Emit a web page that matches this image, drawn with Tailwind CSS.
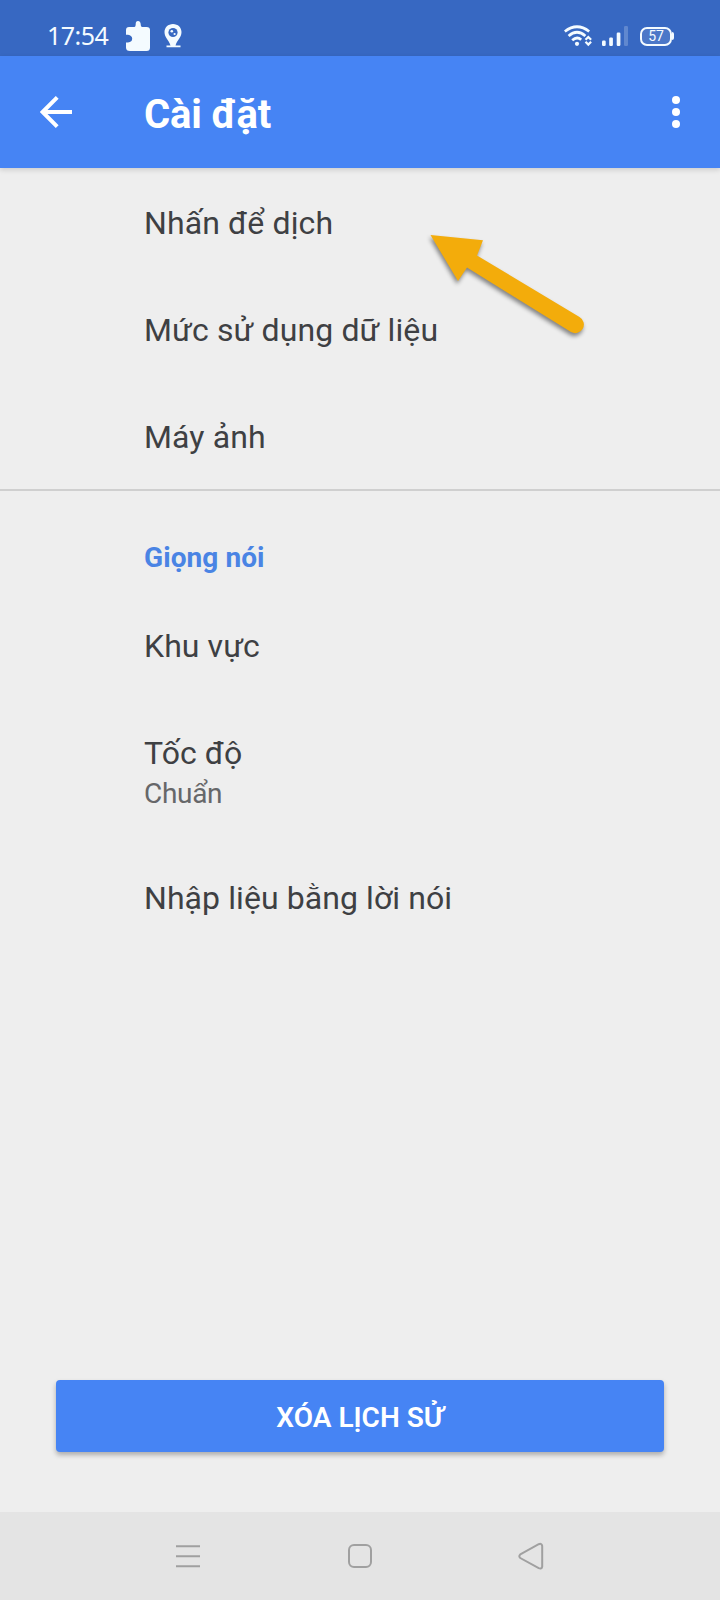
<!DOCTYPE html>
<html lang="vi">
<head>
<meta charset="utf-8">
<meta name="viewport" content="width=device-width, initial-scale=1">
<title>Cài đặt</title>
<script src="https://cdn.jsdelivr.net/npm/@tailwindcss/browser@4"></script>
</head>
<body class="bg-[#eeeeee]">
<div class="relative flex h-[1600px] w-[720px] flex-col overflow-hidden bg-[#eeeeee] font-['Roboto',sans-serif] text-[#3e4043]">

  <!-- Status bar -->
  <div class="flex h-14 shrink-0 items-center justify-between bg-[#3768c2] pl-[47px] pr-[46px] pt-4 text-[#f4fbff]">
    <div class="flex items-center">
      <span class="w-[78px] whitespace-nowrap pb-[2px] font-['Noto_Sans',sans-serif] text-[25px] leading-10 tracking-[-0.5px]">17:54</span>
      <svg class="block h-[32px] w-[26px]" viewBox="0 0 26 32" fill="currentColor"><path d="M4 7H9.5Q10.7 6.500 10.700 4.500V4Q10.700 1 13 1T15.700 4V4.500Q15.700 6.500 17 7H21.500Q25 7 25 10V27.500Q25 31 21.500 31H5Q1 31 1 27.500V22.600H3Q7.200 21.800 7.200 18.700T3 14.800H1V10Q1 7 4 7Z"/></svg>
      <svg class="ml-3 block h-[26px] w-5" viewBox="0 0 20 26"><path d="M10 1C5 1 1.500 4.600 1.500 9C1.500 14.500 5.800 17 7.500 22.500H3.500V24.300H17.500V22.500H12.500C14.200 17 18.500 14.500 18.500 9C18.500 4.600 15 1 10 1Z" fill="currentColor"/><circle cx="10" cy="9.500" r="4.600" fill="#3768c2"/><circle cx="8.800" cy="8.300" r="1.300" fill="currentColor"/><circle cx="11.600" cy="11" r="1.100" fill="currentColor"/></svg>
    </div>
    <div class="flex items-center">
      <svg class="block h-[22px] w-[28px]" viewBox="0 0 28 22" fill="none" stroke="currentColor" stroke-width="2.700"><path d="M.8 6.500Q13 -3 25.200 6.500M4.600 11Q13 3.500 21.400 11M8.200 15.300Q13 11 17.200 14.800"/><circle cx="13" cy="18.800" r="2.100" fill="currentColor" stroke="none"/><path d="M21.500 14.800L24.300 12L27.100 14.800M21.500 16.800L24.300 19.600L27.100 16.800" stroke-width="2.200"/></svg>
      <svg class="ml-[9px] block h-[22px] w-[28px]" viewBox="0 0 28 22" fill="currentColor"><rect x="1" y="15.500" width="3.700" height="5.500" rx="1.200"/><rect x="8.200" y="12.500" width="3.700" height="8.500" rx="1.200"/><rect x="15.700" y="7.500" width="3.700" height="13.500" rx="1.200"/><rect x="23" y="1" width="4" height="20" rx="1.200" opacity=".22"/></svg>
      <div class="ml-[11px] flex items-center">
        <div class="flex h-[19px] w-8 items-center justify-center rounded-[7px] border-2 border-current bg-white/10 text-[14px] leading-none"><span>57</span></div>
        <div class="h-2 w-[2px] rounded-r bg-current"></div>
      </div>
    </div>
  </div>

  <!-- App bar -->
  <header class="flex h-28 shrink-0 items-center bg-[#4684f4] pl-10 pr-10 text-white shadow-[0_2px_5px_rgba(0,0,0,0.14)]">
    <svg class="block h-8 w-8" viewBox="0 0 32 32" fill="none" stroke="currentColor" stroke-width="4"><path d="M32 16H3M17.200 1.400L2.600 16L17.200 30.600"/></svg>
    <h1 class="ml-[72px] pt-[6px] text-[40px] font-bold leading-[48px] tracking-[-0.15px]">Cài đặt</h1>
    <svg class="ml-auto block h-8 w-8" viewBox="0 0 32 32" fill="currentColor"><circle cx="28" cy="4" r="4"/><circle cx="28" cy="16" r="4"/><circle cx="28" cy="28" r="4"/></svg>
  </header>

  <!-- General settings -->
  <ul class="h-[323px] shrink-0 border-b-2 border-[#cfcfcf] pl-36 text-[32px] leading-[38px] tracking-[0.12px]">
    <li class="flex h-[107px] items-center pt-[3px]">Nhấn để dịch</li>
    <li class="flex h-[107px] items-center pt-[3px]">Mức sử dụng dữ liệu</li>
    <li class="flex h-[107px] items-center pt-[3px]">Máy ảnh</li>
  </ul>

  <!-- Voice settings -->
  <section class="pl-36 text-[32px] leading-[38px] tracking-[0.08px]">
    <h2 class="h-[100px] pt-[50px] text-[28px] font-bold leading-[34px] text-[#4a84e4]">Giọng nói</h2>
    <div class="flex h-[107px] items-center pt-[3px]">Khu vực</div>
    <div class="h-[145px] pt-9">
      <div>Tốc độ</div>
      <div class="mt-[3px] text-[28px] tracking-[-0.3px] text-[#666769]">Chuẩn</div>
    </div>
    <div class="flex h-[107px] items-center pt-[3px]">Nhập liệu bằng lời nói</div>
  </section>

  <button class="mx-14 mb-[60px] mt-auto h-[72px] shrink-0 rounded-[4px] bg-[#4684f4] pt-1 text-[28px] font-semibold leading-8 text-white shadow-[0_3px_5px_rgba(0,0,0,0.28)]">XÓA LỊCH SỬ</button>

  <!-- System navigation -->
  <nav class="flex h-[88px] shrink-0 items-center justify-between bg-[#e4e4e4] px-[174px] text-[#a0a0a0]">
    <svg class="block h-7 w-7" viewBox="0 0 28 28" fill="none" stroke="currentColor" stroke-width="2"><path d="M2 4.300H26M2 14.300H26M2 24.300H26"/></svg>
    <svg class="block h-7 w-7" viewBox="0 0 28 28" fill="none" stroke="currentColor" stroke-width="2"><rect x="3" y="3" width="22" height="22" rx="5"/></svg>
    <svg class="block h-7 w-7" viewBox="0 0 28 28" fill="none" stroke="currentColor" stroke-width="2"><path d="M2.300 12.400L20.700 2.200Q23.800 1 24.200 4V24.500Q23.800 27.500 20.700 26.200L2.300 16Q.300 14.200 2.300 12.400Z"/></svg>
  </nav>

  <!-- Arrow annotation over the list -->
  <svg class="absolute left-[410px] top-[215px] h-[130px] w-[190px] drop-shadow-[-1px_3px_2px_rgba(0,0,0,0.45)]" viewBox="0 0 190 130" fill="#f3ac0b"><path d="M20.500 20L73 25.300L67 40.500L169.500 102A8.500 8.500 0 0 1 161 117L57 52.500L48 66Z"/></svg>
</div>
</body>
</html>
